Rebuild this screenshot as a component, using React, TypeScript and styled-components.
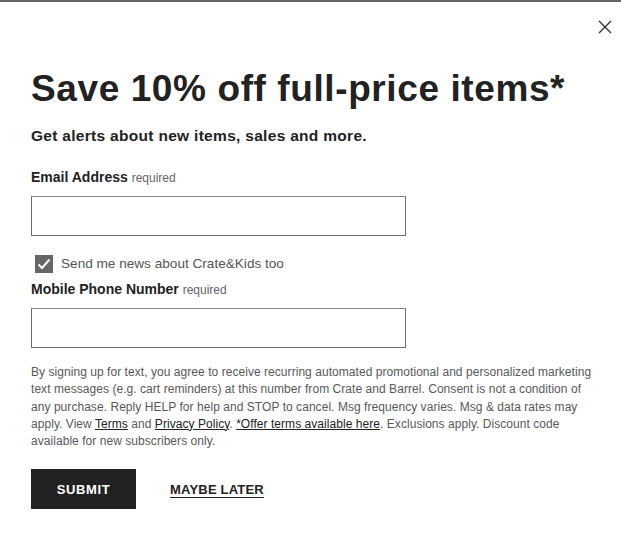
import * as React from "react";
import styled, { createGlobalStyle } from "styled-components";

const GlobalStyle = createGlobalStyle`
  html, body {
    margin: 0;
    padding: 0;
    background: #fff;
  }
  body {
    font-family: "Liberation Sans", Arial, Helvetica, sans-serif;
    color: #222;
  }
`;

const Modal = () => (
  <>
    <GlobalStyle />
    <Dialog>
      <CloseButton aria-label="Close">
        <svg width="14" height="14" viewBox="0 0 14 14">
          <path d="M1 1 L13 13 M13 1 L1 13" stroke="#333" strokeWidth="1.4" fill="none" />
        </svg>
      </CloseButton>
      <Heading>Save 10% off full-price items*</Heading>
      <Subheading>Get alerts about new items, sales and more.</Subheading>

      <Label>
        Email Address <Required>required</Required>
      </Label>
      <Field type="email" />

      <CheckRow>
        <CheckBox>
          <svg width="14" height="12" viewBox="0 0 14 12">
            <path d="M1.5 6.5 L5 10 L12.5 1.5" stroke="#fff" strokeWidth="2" fill="none" />
          </svg>
        </CheckBox>
        <CheckText>Send me news about Crate&amp;Kids too</CheckText>
      </CheckRow>

      <Label $tight>
        Mobile Phone Number <Required>required</Required>
      </Label>
      <Field type="tel" />

      <Disclaimer>
        By signing up for text, you agree to receive recurring automated promotional and
        personalized marketing text messages (e.g. cart reminders) at this number from Crate and
        Barrel. Consent is not a condition of any purchase. Reply HELP for help and STOP to
        cancel. Msg frequency varies. Msg &amp; data rates may apply. View <TextLink>Terms</TextLink>{" "}
        and <TextLink>Privacy Policy</TextLink>. <TextLink>*Offer terms available here</TextLink>.
        Exclusions apply. Discount code available for new subscribers only.
      </Disclaimer>

      <Actions>
        <SubmitButton>SUBMIT</SubmitButton>
        <LaterLink>MAYBE LATER</LaterLink>
      </Actions>
    </Dialog>
  </>
);

const Dialog = styled.div`
  position: relative;
  box-sizing: border-box;
  width: 621px;
  height: 553px;
  border-top: 2px solid #666;
  padding: 0 28px 0 31px;
  display: flex;
  flex-direction: column;
  align-items: flex-start;
`;

const CloseButton = styled.button`
  position: absolute;
  top: 18px;
  right: 9px;
  width: 14px;
  height: 14px;
  padding: 0;
  border: 0;
  background: none;
  display: flex;
`;

const Heading = styled.h1`
  margin: 65px 0 0;
  font-size: 37px;
  line-height: 43px;
  font-weight: 700;
  color: #222;
  letter-spacing: 0.6px;
  white-space: nowrap;
`;

const Subheading = styled.p`
  margin: 16px 0 0;
  font-size: 15.5px;
  line-height: 20px;
  font-weight: 700;
  color: #222;
  letter-spacing: 0.3px;
`;

const Label = styled.label<{ $tight?: boolean }>`
  display: block;
  margin: ${(p) => (p.$tight ? "7px" : "22px")} 0 0;
  font-size: 14px;
  line-height: 18px;
  font-weight: 700;
  color: #222;
`;

const Required = styled.span`
  font-size: 12px;
  font-weight: 400;
  color: #666;
`;

const Field = styled.input`
  box-sizing: border-box;
  width: 375px;
  height: 40px;
  margin-top: 9px;
  border: 1px solid #6b6b6b;
  border-top-color: #888;
  border-radius: 0;
  background: #fff;
`;

const CheckRow = styled.div`
  display: flex;
  align-items: center;
  gap: 8px;
  margin: 19px 0 0 4px;
`;

const CheckBox = styled.span`
  width: 18px;
  height: 18px;
  background: #666;
  display: flex;
  align-items: center;
  justify-content: center;
`;

const CheckText = styled.span`
  font-size: 13.6px;
  line-height: 18px;
  color: #555;
`;

const Disclaimer = styled.p`
  margin: 16px 0 0;
  font-size: 12px;
  line-height: 17.25px;
  letter-spacing: 0.05px;
  color: #595959;
`;

const TextLink = styled.a`
  color: #222;
  text-decoration: underline;
`;

const Actions = styled.div`
  display: flex;
  align-items: center;
  gap: 34px;
  margin-top: 19px;
`;

const SubmitButton = styled.button`
  width: 105px;
  height: 40px;
  border: 0;
  background: #222;
  color: #fff;
  font-family: inherit;
  font-size: 13px;
  font-weight: 700;
  letter-spacing: 0.6px;
`;

const LaterLink = styled.a`
  font-size: 13px;
  font-weight: 700;
  letter-spacing: 0.2px;
  color: #222;
  text-decoration: underline;
  text-underline-offset: 3px;
`;

export default Modal;
